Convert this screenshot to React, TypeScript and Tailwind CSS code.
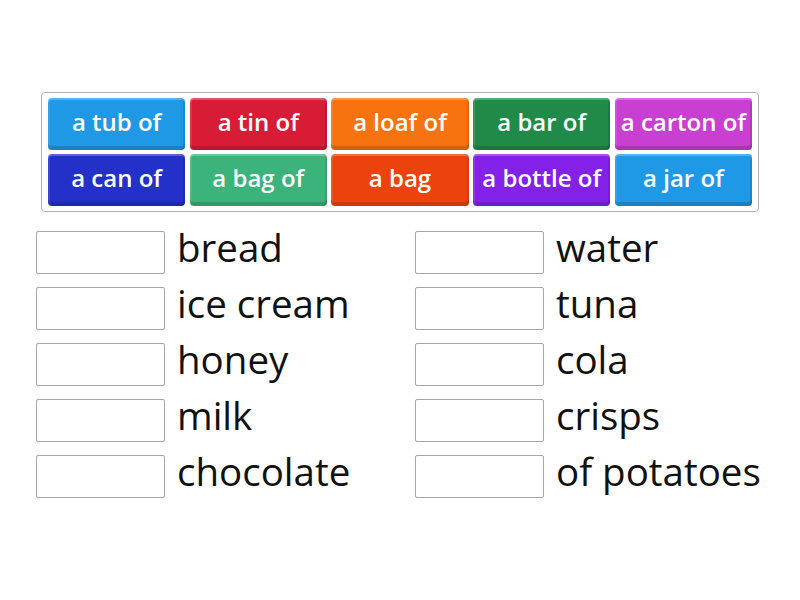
import React from "react";

const tiles: { label: string; cls: string }[] = [
  { label: "a tub of", cls: "bg-[#1f98e6]" },
  { label: "a tin of", cls: "bg-[#d91c36]" },
  { label: "a loaf of", cls: "bg-[#f7730f]" },
  { label: "a bar of", cls: "bg-[#208a48]" },
  { label: "a carton of", cls: "bg-[#c93fd1]" },
  { label: "a can of", cls: "bg-[#2331c9]" },
  { label: "a bag of", cls: "bg-[#3bb37a]" },
  { label: "a bag", cls: "bg-[#ec430e]" },
  { label: "a bottle of", cls: "bg-[#8421e8]" },
  { label: "a jar of", cls: "bg-[#1f98e6]" },
];

const left = ["bread", "ice cream", "honey", "milk", "chocolate"];
const right = ["water", "tuna", "cola", "crisps", "of potatoes"];

function Row({ word }: { word: string }) {
  return (
    <div className="flex items-center h-[42px]">
      <div className="w-[129px] h-[43px] border border-[#a8a8a8] rounded-[2px] bg-white shrink-0" />
      <div className="ml-[12px] text-[38.5px] leading-none text-[#111] whitespace-nowrap -mt-[10px]">{word}</div>
    </div>
  );
}

export default function App() {
  return (
    <div
      className="w-[800px] h-[600px] bg-white relative overflow-hidden"
      style={{ fontFamily: '"Open Sans", sans-serif' }}
    >
      <div className="pt-[92px] pl-[41px]">
        <div className="w-[718px] h-[120px] border border-[#b0b0b0] rounded-[4px] px-[6px] pt-[5px]">
          <div className="grid grid-cols-5 gap-x-[4.5px] gap-y-[4px]">
            {tiles.map((t) => (
              <div
                key={t.label}
                className={`${t.cls} h-[52px] rounded-[4px] flex items-center justify-center text-white font-semibold text-[24px] whitespace-nowrap shadow-[inset_0_2px_0_rgba(255,255,255,0.25),inset_0_-4px_0_rgba(0,0,0,0.15),inset_2px_0_0_rgba(255,255,255,0.1),inset_-2px_0_0_rgba(0,0,0,0.1)] pb-[5px]`}
              >
                {t.label}
              </div>
            ))}
          </div>
        </div>
      </div>
      <div className="flex pt-[19px] pl-[36px]">
        <div className="w-[379px] flex flex-col gap-[14px]">
          {left.map((w) => (
            <Row key={w} word={w} />
          ))}
        </div>
        <div className="flex flex-col gap-[14px]">
          {right.map((w) => (
            <Row key={w} word={w} />
          ))}
        </div>
      </div>
    </div>
  );
}
